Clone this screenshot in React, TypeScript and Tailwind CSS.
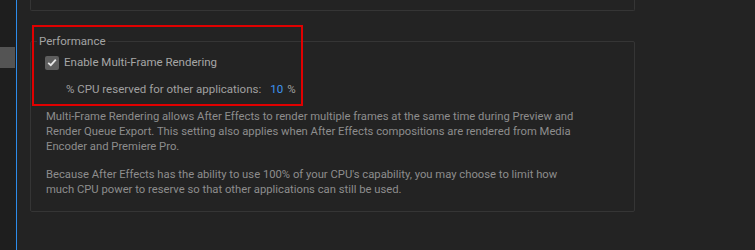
import React from 'react';

export default function App() {
    return (
        <div className="flex w-[755px] h-[250px] bg-[#232323] overflow-hidden font-['Roboto',sans-serif] text-[11.25px]">
            {/* left rail */}
            <div className="w-[16px] shrink-0 bg-[#1e1e1e] pt-[47px]">
                <div className="w-[15px] h-[21px] bg-[#545454]" />
            </div>
            <div className="w-px shrink-0 bg-[#2d8ceb]" />

            {/* content */}
            <div className="flex-1 pl-[13px]">
                <div className="w-[605px] h-[12px] -mt-[1px] border border-t-0 border-[#353535] rounded-b-[2px]" />

                <fieldset className="relative mt-[23px] w-[605px] h-[178px] border border-[#353535] rounded-[2px] px-[15px] pt-[1px]">
                    <legend className="-ml-[9px] px-[2px] text-[#a3a3a3] text-[11.5px] leading-[14px]">Performance</legend>

                    {/* highlight box */}
                    <div className="absolute left-[1px] top-[-23px] w-[271px] h-[81px] border-2 border-[#e00000] pointer-events-none" />

                    <div className="flex items-center gap-[5px] -ml-[1px] mt-[5px]">
                        <div className="w-[14px] h-[14px] rounded-[2px] bg-[#5e5e5e] flex items-center justify-center">
                            <svg width="10" height="9" viewBox="0 0 10 9">
                                <path d="M1.2 4.8 L3.8 7.2 L8.8 1.6" fill="none" stroke="#e6e6e6" strokeWidth="1.8" />
                            </svg>
                        </div>
                        <span className="text-[#a6a6a6] text-[11.5px]">Enable Multi-Frame Rendering</span>
                    </div>

                    <div className="flex items-center mt-[10px] ml-[20px] text-[#a0a0a0] text-[11.5px]">
                        <span>% CPU reserved for other applications:</span>
                        <span className="ml-[9px] text-[#3d93f0]">10</span>
                        <span className="ml-[4px]">%</span>
                    </div>

                    <div className="mt-[10px] text-[#8d8d8d] leading-[15px] whitespace-nowrap">
                        <p>
                            Multi-Frame Rendering allows After Effects to render multiple frames at the same time during Preview and
                            <br />
                            Render Queue Export. This setting also applies when After Effects compositions are rendered from Media
                            <br />
                            Encoder and Premiere Pro.
                        </p>
                        <p className="mt-[13px]">
                            Because After Effects has the ability to use 100% of your CPU's capability, you may choose to limit how
                            <br />
                            much CPU power to reserve so that other applications can still be used.
                        </p>
                    </div>
                </fieldset>
            </div>
        </div>
    );
}
